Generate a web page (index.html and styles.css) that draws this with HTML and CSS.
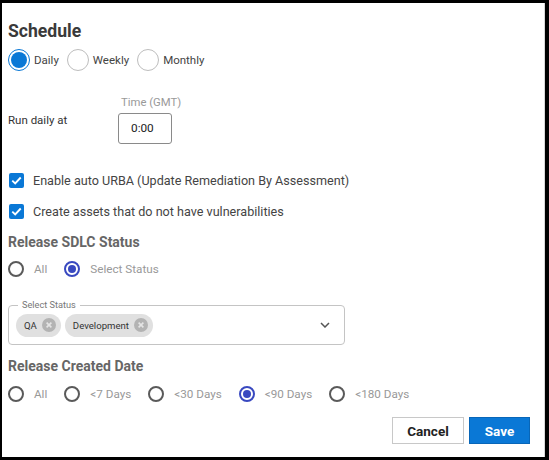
FILE: index.html
```html
<!DOCTYPE html>
<html>
<head>
<meta charset="utf-8">
<link rel="stylesheet" href="styles.css">
</head>
<body>
<div class="panel">
  <h1 class="title">Schedule</h1>
  <div class="freq-row">
    <label class="freq"><span class="big-radio on"></span><span>Daily</span></label>
    <label class="freq"><span class="big-radio"></span><span>Weekly</span></label>
    <label class="freq"><span class="big-radio"></span><span>Monthly</span></label>
  </div>
  <div class="time-row">
    <div class="run-label">Run daily at</div>
    <div class="time-col">
      <div class="time-label">Time (GMT)</div>
      <div class="time-input">0:00</div>
    </div>
  </div>
  <label class="check-row first"><span class="checkbox"><svg viewBox="0 0 16 16" width="15" height="15"><path d="M3.5 8.2 L6.6 11.2 L12.5 4.8" fill="none" stroke="#fff" stroke-width="2"/></svg></span><span>Enable auto URBA (Update Remediation By Assessment)</span></label>
  <label class="check-row"><span class="checkbox"><svg viewBox="0 0 16 16" width="15" height="15"><path d="M3.5 8.2 L6.6 11.2 L12.5 4.8" fill="none" stroke="#fff" stroke-width="2"/></svg></span><span>Create assets that do not have vulnerabilities</span></label>

  <h2 class="section">Release SDLC Status</h2>
  <div class="radio-row">
    <label class="opt"><span class="radio"></span><span>All</span></label>
    <label class="opt"><span class="radio on"></span><span>Select Status</span></label>
  </div>

  <div class="select-box">
    <span class="legend">Select Status</span>
    <div class="chips">
      <span class="chip">QA<span class="chip-x"><svg viewBox="0 0 14 14" width="14" height="14"><circle cx="7" cy="7" r="7" fill="#b3b3b3"/><path d="M4.6 4.6 L9.4 9.4 M9.4 4.6 L4.6 9.4" stroke="#e4e4e4" stroke-width="1.6"/></svg></span></span>
      <span class="chip">Development<span class="chip-x"><svg viewBox="0 0 14 14" width="14" height="14"><circle cx="7" cy="7" r="7" fill="#b3b3b3"/><path d="M4.6 4.6 L9.4 9.4 M9.4 4.6 L4.6 9.4" stroke="#e4e4e4" stroke-width="1.6"/></svg></span></span>
    </div>
    <svg class="chevron" viewBox="0 0 10 6" width="10" height="6"><path d="M1 1 L5 5 L9 1" fill="none" stroke="#555" stroke-width="1.5"/></svg>
  </div>

  <h2 class="section">Release Created Date</h2>
  <div class="radio-row date-row">
    <label class="opt"><span class="radio"></span><span>All</span></label>
    <label class="opt"><span class="radio"></span><span>&lt;7 Days</span></label>
    <label class="opt"><span class="radio"></span><span>&lt;30 Days</span></label>
    <label class="opt"><span class="radio on"></span><span>&lt;90 Days</span></label>
    <label class="opt"><span class="radio"></span><span>&lt;180 Days</span></label>
  </div>

  <div class="actions">
    <button class="btn cancel">Cancel</button>
    <button class="btn save">Save</button>
  </div>
</div>
</body>
</html>
```
FILE: styles.css
```css
html, body {
  margin: 0;
  padding: 0;
  background: #000;
  width: 549px;
  height: 460px;
  overflow: hidden;
}
body {
  font-family: Roboto, "Liberation Sans", sans-serif;
  color: #333;
}
.panel {
  margin: 3px 0 0 2px;
  width: 543px;
  height: 454px;
  background: #fff;
  border-right: 1px solid #d8d8d8;
  box-sizing: border-box;
  padding: 16px 6px 0;
}
.title {
  margin: 0;
  font-size: 17.6px;
  line-height: 24px;
  font-weight: 700;
  color: #3a3a3a;
}
.freq-row {
  margin-top: 5px;
  display: flex;
  height: 24px;
  align-items: center;
}
.freq {
  display: flex;
  align-items: center;
  font-size: 11.5px;
  color: #444;
  margin-right: 8px;
}
.big-radio {
  width: 22px;
  height: 22px;
  box-sizing: border-box;
  border-radius: 50%;
  border: 1px solid #bdbdbd;
  margin-right: 4px;
  position: relative;
}
.big-radio.on {
  border-color: #0a78d6;
}
.big-radio.on::after {
  content: "";
  position: absolute;
  left: 2px;
  top: 2px;
  width: 16px;
  height: 16px;
  border-radius: 50%;
  background: #0a78d6;
}
.time-row {
  margin-top: 23px;
  display: flex;
}
.run-label {
  width: 110px;
  padding-top: 17px;
  font-size: 11.5px;
  line-height: 16px;
  color: #333;
}
.time-label {
  font-size: 11.3px;
  line-height: 16px;
  color: #999;
  padding-left: 3px;
}
.time-input {
  margin-top: 2px;
  width: 54px;
  height: 31px;
  box-sizing: border-box;
  border: 1px solid #8a8a8a;
  border-radius: 3px;
  font-size: 11.8px;
  line-height: 29px;
  padding-left: 12px;
  color: #222;
}
.check-row {
  display: flex;
  align-items: center;
  height: 20px;
  margin-top: 11px;
  font-size: 12.6px;
  color: #444;
}
.check-row.first {
  margin-top: 26px;
}
.checkbox {
  width: 15px;
  height: 15px;
  margin-left: 1px;
  margin-right: 9px;
  background: #0a78d6;
  border-radius: 2px;
  display: flex;
}
.section {
  margin: 11px 0 0;
  font-size: 14px;
  line-height: 20px;
  font-weight: 700;
  color: #666;
}
.radio-row {
  margin-top: 7px;
  display: flex;
  align-items: center;
  height: 20px;
}
.date-row {
  margin-top: 8px;
}
.opt {
  display: flex;
  align-items: center;
  font-size: 11.7px;
  color: #999;
  margin-right: 17px;
}
.radio {
  width: 16px;
  height: 16px;
  box-sizing: border-box;
  border: 2px solid #5a5a5a;
  border-radius: 50%;
  margin-right: 10px;
  position: relative;
}
.radio.on {
  border-color: #3949c0;
}
.radio.on::after {
  content: "";
  position: absolute;
  left: 2px;
  top: 2px;
  width: 8px;
  height: 8px;
  border-radius: 50%;
  background: #3949c0;
}
.select-box {
  margin-top: 26px;
  width: 337px;
  height: 40px;
  box-sizing: border-box;
  border: 1px solid #c4c4c4;
  border-radius: 4px;
  position: relative;
  display: flex;
  align-items: center;
  padding: 0 14px 0 7px;
}
.legend {
  position: absolute;
  left: 9px;
  top: -7px;
  background: #fff;
  padding: 0 4px;
  font-size: 9.2px;
  line-height: 12px;
  color: #777;
}
.chips {
  display: flex;
  gap: 4px;
  flex: 1;
}
.chip {
  display: flex;
  align-items: center;
  height: 23px;
  border-radius: 12px;
  background: #e0e0e0;
  font-size: 9.6px;
  color: #333;
  padding: 0 4.5px 0 8px;
}
.chip-x {
  display: flex;
  margin-left: 5.5px;
}
.chevron {
  display: block;
}
.actions {
  margin-top: 13px;
  display: flex;
  justify-content: flex-end;
  gap: 5px;
  padding-right: 8px;
}
.btn {
  height: 27px;
  font-family: Roboto, "Liberation Sans", sans-serif;
  font-size: 13.5px;
  font-weight: 700;
  border-radius: 0;
  cursor: pointer;
}
.cancel {
  width: 72px;
  background: #fff;
  border: 1px solid #c8c8c8;
  color: #222;
}
.save {
  width: 61px;
  background: #0a78d6;
  border: 1px solid #0866b8;
  color: #fff;
}
```
